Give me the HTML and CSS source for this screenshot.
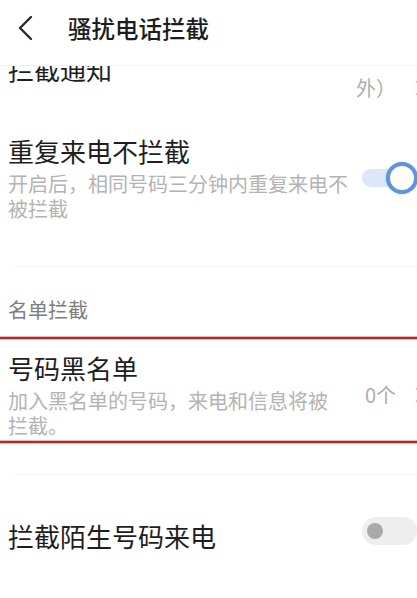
FILE: index.html
```html
<!DOCTYPE html>
<html lang="zh-CN">
<head>
    <meta charset="UTF-8">
    <meta name="viewport" content="width=device-width, initial-scale=1.0">
    <title>骚扰电话拦截</title>
    <link rel="stylesheet" href="styles.css">
</head>
<body>
    <div class="page">
        <div class="topbar">
            <svg class="back" viewBox="0 0 16 26" width="16" height="26">
                <path d="M14 2 L3 13 L14 24" fill="none" stroke="#2a2a2a" stroke-width="2.4" stroke-linecap="round" stroke-linejoin="round"/>
            </svg>
            <div class="topbar-title">骚扰电话拦截</div>
        </div>

        <div class="list">
            <!-- scrolled half under the top bar -->
            <div class="row row-first">
                <div class="row-text">
                    <div class="row-title">拦截通知</div>
                </div>
                <div class="row-side side-first">
                    <div class="row-value">外）</div>
                    <svg class="chevron" viewBox="0 0 8 16" width="8" height="16">
                        <path d="M1 1 L7 8 L1 15" fill="none" stroke="#c4c4c4" stroke-width="1.6"/>
                    </svg>
                </div>
            </div>

            <div class="row">
                <div class="row-text">
                    <div class="row-title">重复来电不拦截</div>
                    <div class="row-sub">开启后，相同号码三分钟内重复来电不被拦截</div>
                </div>
                <div class="switch switch-on">
                    <div class="knob"></div>
                </div>
            </div>

            <div class="divider"></div>

            <div class="section-label">名单拦截</div>

            <div class="marked">
                <div class="row row-marked">
                    <div class="row-text">
                        <div class="row-title">号码黑名单</div>
                        <div class="row-sub">加入黑名单的号码，来电和信息将被拦截。</div>
                    </div>
                    <div class="row-side side-value">
                        <div class="row-value">0个</div>
                        <svg class="chevron" viewBox="0 0 8 16" width="8" height="16">
                            <path d="M1 1 L7 8 L1 15" fill="none" stroke="#c4c4c4" stroke-width="1.6"/>
                        </svg>
                    </div>
                </div>
            </div>

            <div class="divider divider-low"></div>

            <div class="row row-plain">
                <div class="row-text">
                    <div class="row-title">拦截陌生号码来电</div>
                </div>
                <div class="switch switch-off">
                    <div class="knob"></div>
                </div>
            </div>
        </div>
    </div>
</body>
</html>
```

FILE: styles.css
```css
html,
body {
    margin: 0;
    overflow: hidden;
    background: #fff;
}

body {
    font-family: "Noto Sans CJK SC", "Noto Sans", sans-serif;
    color: #1e1e1e;
}

.page {
    width: 440px;
    height: 598px;
    overflow: hidden;
}

.topbar {
    height: 66px;
    box-sizing: border-box;
    padding-bottom: 10px;
    display: flex;
    align-items: center;
    border-bottom: 1px solid #f2f2f2;
    background: #fff;
}

.back {
    margin-left: 17px;
    flex: none;
}

.topbar-title {
    margin-left: 35px;
    font-size: 23.5px;
    font-weight: 500;
    line-height: 30px;
    color: #1c1c1c;
}

.list {
    height: 532px;
    overflow: hidden;
}

.row {
    display: flex;
    align-items: center;
    padding: 17px 23px 17px 8px;
}

.row-first {
    margin-top: -33px;
    align-items: flex-start;
}

.row-first .row-title {
    margin-top: 2px;
}

.row-text {
    flex: 1;
    min-width: 0;
}

.row-title {
    font-size: 26px;
    line-height: 34px;
}

.row-sub {
    margin-top: 3px;
    font-size: 20px;
    line-height: 25px;
    color: #b3b3b3;
}

.row-side {
    display: flex;
    align-items: center;
    margin-left: 28px;
}

.side-first {
    margin-top: 25px;
}

.row-value {
    font-size: 20px;
    line-height: 25px;
    color: #adadad;
}

.chevron {
    flex: none;
    margin-left: 19px;
    margin-right: -6px;
}

.switch {
    flex: none;
    width: 55px;
    margin-left: 10px;
    display: flex;
    align-items: center;
    box-sizing: border-box;
}

.switch-on {
    height: 18px;
    border-radius: 9px;
    background: #dce7fa;
    justify-content: flex-end;
}

.switch-on .knob {
    flex: none;
    width: 32px;
    height: 32px;
    margin: -7px -1px -7px 0;
    box-sizing: border-box;
    border: 4px solid #6094da;
    border-radius: 50%;
    background: #fffef8;
    box-shadow: 0 0 2px rgba(60, 120, 200, 0.4);
}

.switch-off {
    height: 28px;
    margin-top: -2px;
    padding-left: 5px;
    border-radius: 14px;
    background: #eeeeee;
}

.switch-off .knob {
    width: 16px;
    height: 16px;
    border-radius: 50%;
    background: #a9a9a9;
}

.divider {
    height: 1px;
    margin: 28px 0 0 15px;
    background: #f3f3f3;
}

.divider-low {
    margin-top: 31px;
}

.section-label {
    padding: 30px 8px 0;
    font-size: 20px;
    line-height: 25px;
    color: #7d7d7d;
}

.marked {
    margin-top: 15px;
    border-top: 2px solid #a83232;
    border-bottom: 2px solid #a83232;
    box-shadow: 0 -1px 0 #eeb3b3, 0 1px 0 #eeb3b3, inset 0 1px 0 #eeb3b3, inset 0 -1px 0 #eeb3b3;
}

.row-marked {
    padding-top: 12px;
    padding-bottom: 3px;
}

.row-plain {
    align-items: flex-start;
    padding-top: 44px;
}
```
